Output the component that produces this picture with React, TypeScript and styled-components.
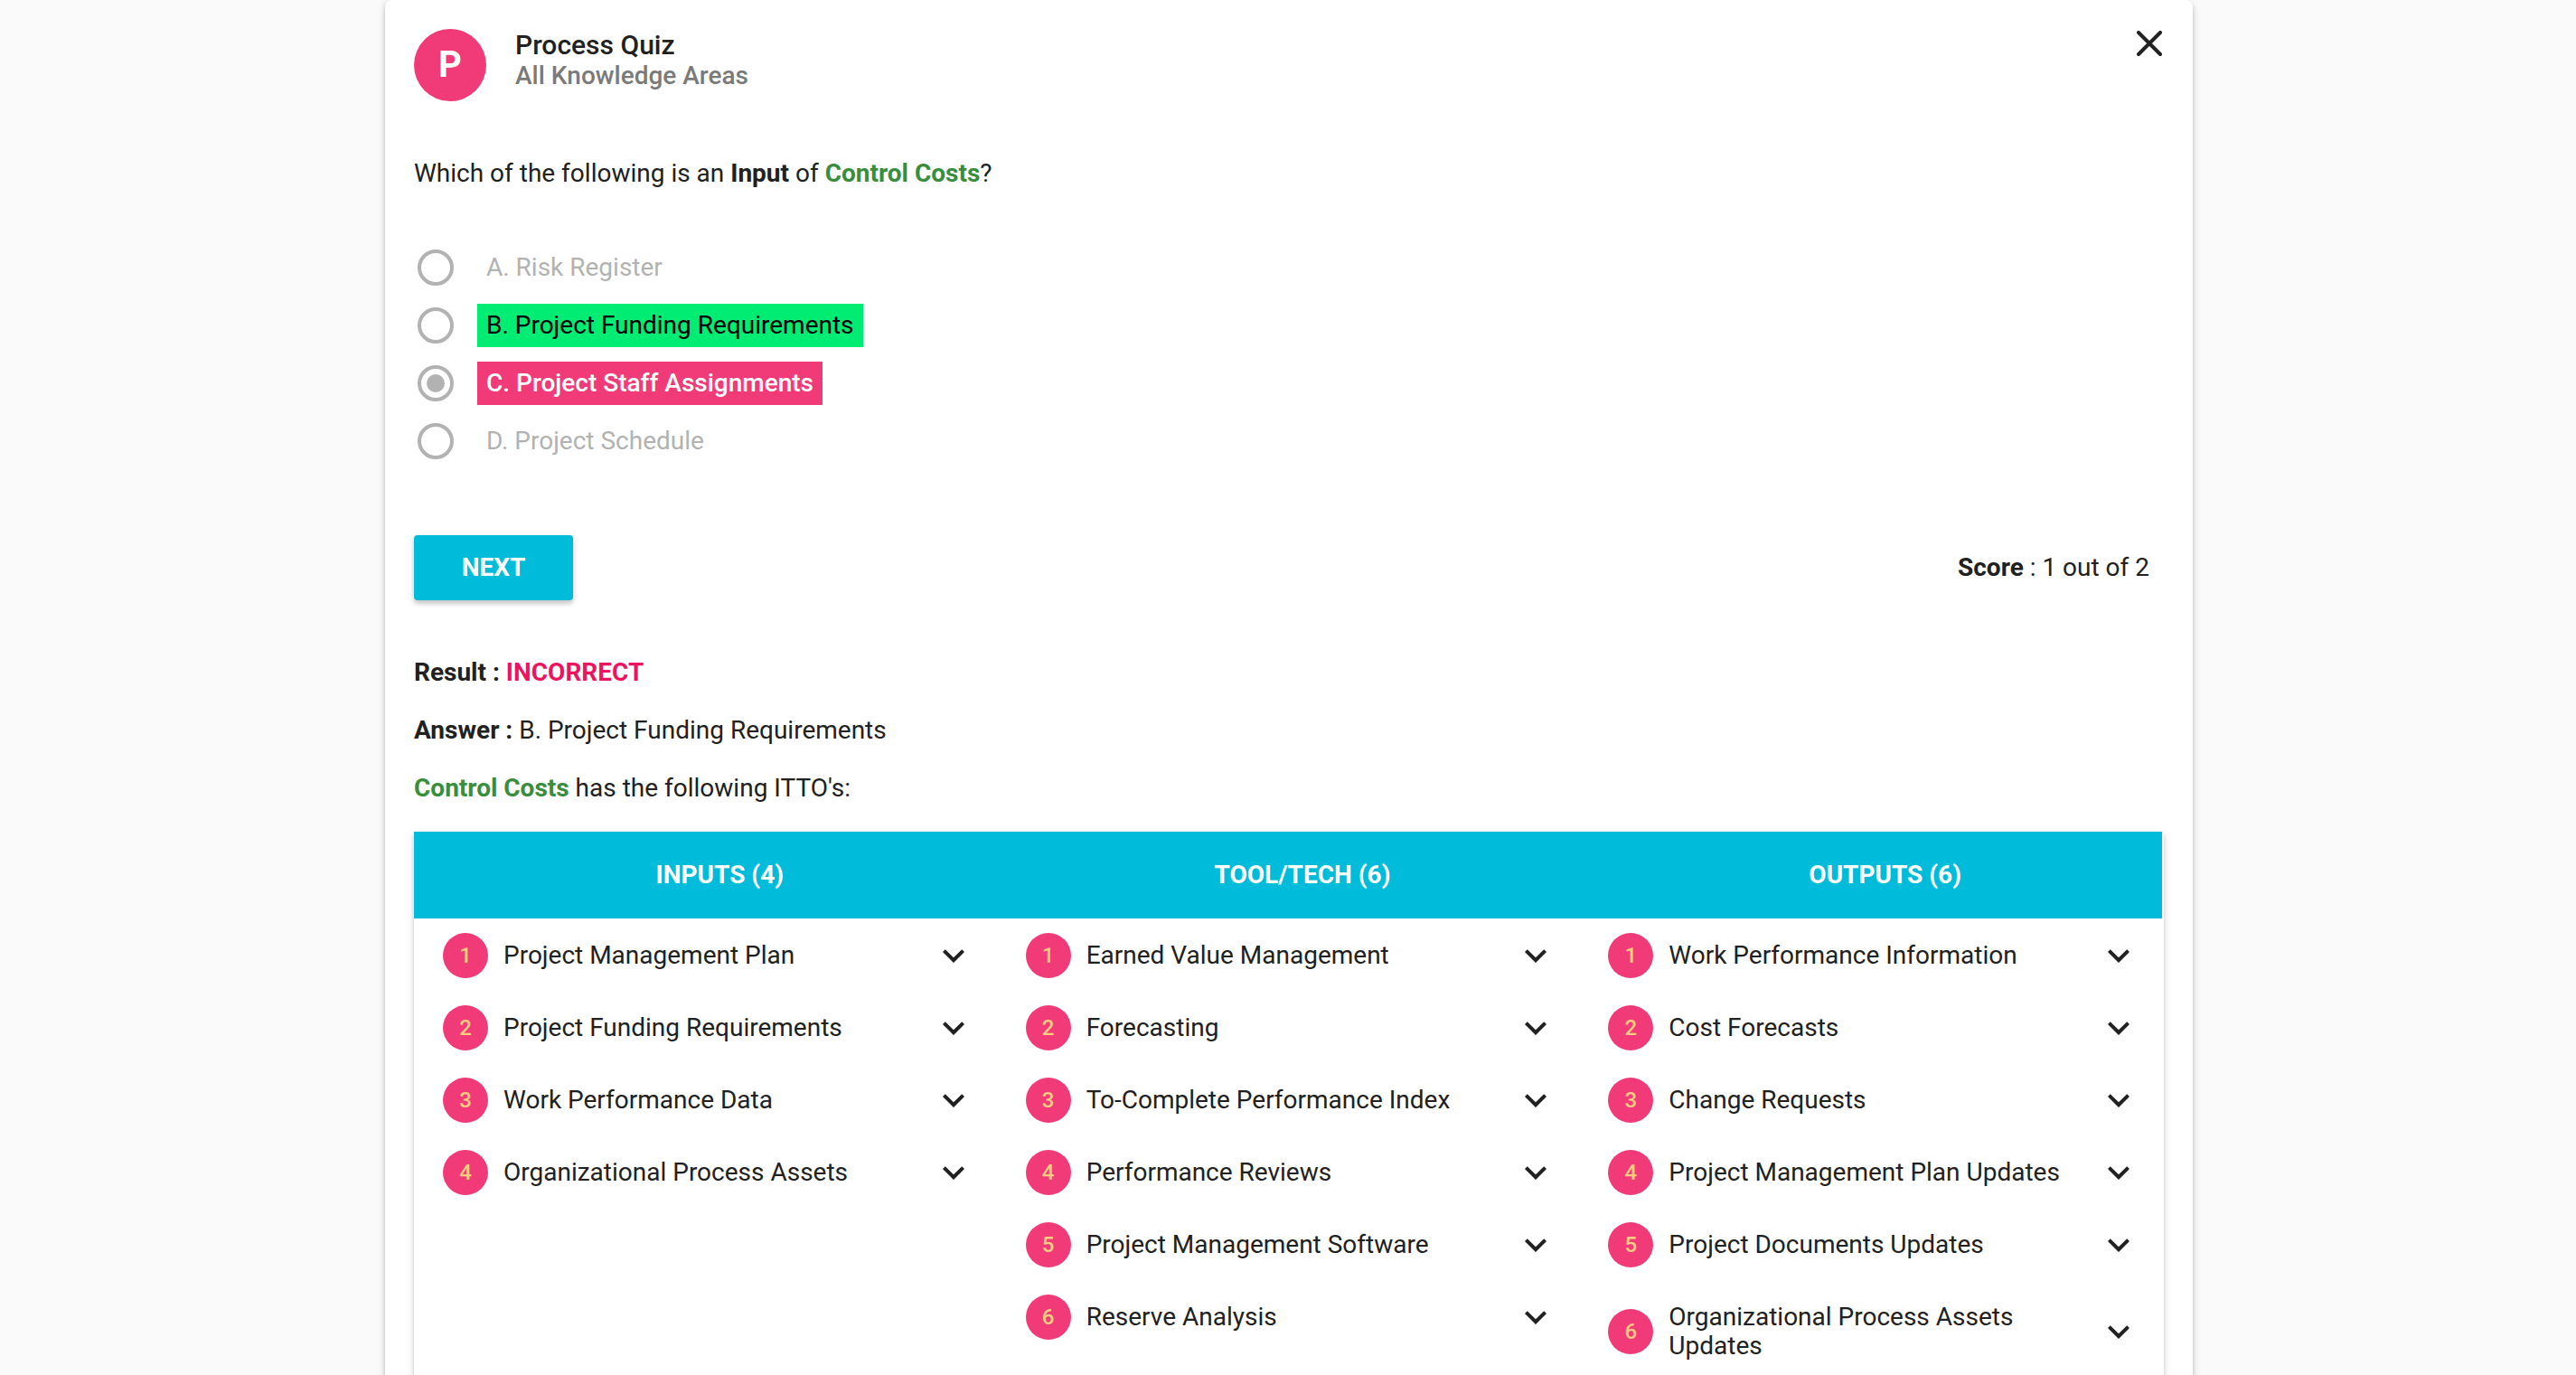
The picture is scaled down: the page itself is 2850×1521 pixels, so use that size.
import React from "react";
import styled, { createGlobalStyle, css } from "styled-components";

const color = {
  page: "#fafafa",
  ink: "#212121",
  muted: "#7a7a7a",
  disabled: "#b2b2b2",
  pink: "#f13b78",
  cyan: "#00bcda",
  right: "#00ec72",
  process: "#388e3c",
  wrong: "#ed145f",
  digit: "#ffcc80",
};

const GlobalStyle = createGlobalStyle`
  *, *::before, *::after { box-sizing: border-box; }
  html { background: ${color.page}; scrollbar-width: none; }
  body { margin: 0; padding-left: 2px; font: 400 28px/32px Roboto, sans-serif; color: ${color.ink}; }
  button { font: inherit; color: inherit; border: 0; background: none; padding: 0; cursor: pointer; }
  h1, h2, p, ul, fieldset { margin: 0; padding: 0; border: 0; }
`;

const Card = styled.main`
  max-width: 2000px;
  margin: 0 auto;
  padding: 32px;
  background: #fff;
  border-radius: 8px;
  box-shadow: 0 2px 10px rgba(0, 0, 0, 0.16), 0 4px 4px rgba(0, 0, 0, 0.14);
`;

const Header = styled.header`
  display: flex;
  align-items: flex-start;
  gap: 32px;
`;

const Avatar = styled.div`
  display: grid;
  place-items: center;
  width: 80px;
  height: 80px;
  border-radius: 50%;
  background: ${color.pink};
  color: #fff;
  font-size: 40px;
  font-weight: 700;
`;

const Heading = styled.div`
  flex: 1;
  padding-top: 1px;
  line-height: 34px;
  font-weight: 500;
`;

const Title = styled.h1`
  font-size: 30px;
  font-weight: inherit;
  line-height: inherit;
`;

const Subtitle = styled.p`
  color: ${color.muted};
`;

const CloseButton = styled.button`
  display: flex;
  margin: 2px 2px 0 0;
`;

const Question = styled.p`
  margin-top: 64px;
`;

const ProcessName = styled.strong`
  color: ${color.process};
`;

const Options = styled.fieldset`
  margin: 56px 0 72px;
`;

const Option = styled.label`
  display: flex;
  align-items: center;
  gap: 26px;
  height: 64px;
  padding-left: 4px;
`;

const Radio = styled.input`
  appearance: none;
  display: grid;
  place-items: center;
  width: 40px;
  height: 40px;
  margin: 0;
  border: 4px solid ${color.disabled};
  border-radius: 50%;

  &:checked::before {
    content: "";
    width: 20px;
    height: 20px;
    border-radius: 50%;
    background: ${color.disabled};
  }
`;

type Mark = "none" | "right" | "wrong";

const OptionText = styled.span<{ $mark: Mark }>`
  padding: 8px 10px;
  color: ${color.disabled};
  ${({ $mark }) => $mark === "right" && css`background: ${color.right}; color: #000;`}
  ${({ $mark }) => $mark === "wrong" && css`background: ${color.pink}; color: #fff; font-weight: 500;`}
`;

const Actions = styled.div`
  display: flex;
  align-items: center;
  justify-content: space-between;
  padding-right: 16px;
  margin-bottom: 64px;
`;

const NextButton = styled.button`
  width: 176px;
  height: 72px;
  border-radius: 4px;
  background: ${color.cyan};
  color: #fff;
  font-weight: 700;
  box-shadow: 0 2px 10px rgba(0, 0, 0, 0.12), 0 4px 4px rgba(0, 0, 0, 0.14);
`;

const Feedback = styled.p`
  margin-bottom: 32px;
`;

const Verdict = styled.strong`
  color: ${color.wrong};
`;

const Columns = styled.div`
  display: grid;
  grid-template-columns: repeat(3, 1fr);
  padding-right: 2px;
  background: #fff;
  box-shadow: 0 2px 10px rgba(0, 0, 0, 0.12), 0 4px 4px rgba(0, 0, 0, 0.14);
`;

const ColumnTitle = styled.h2`
  padding: 32px 0 32px 32px;
  background: ${color.cyan};
  color: #fff;
  font-size: 28px;
  font-weight: 700;
  line-height: 32px;
  text-align: center;
`;

const List = styled.ul`
  padding-top: 1px;
  list-style: none;
`;

const Row = styled.button`
  display: flex;
  align-items: center;
  gap: 17px;
  width: 100%;
  min-height: 80px;
  padding: 0 24px 0 32px;
  text-align: left;
`;

const Index = styled.span`
  display: grid;
  place-items: center;
  flex: none;
  width: 50px;
  height: 50px;
  border-radius: 50%;
  background: ${color.pink};
  color: ${color.digit};
  font-size: 24px;
  font-weight: 500;
`;

const RowText = styled.span`
  flex: 1;
  padding: 24px 0;
`;

const Chevron = () => (
  <svg width="48" height="48" viewBox="0 0 24 24" fill="currentColor" aria-hidden="true">
    <path d="M16.59 8.59 12 13.17 7.41 8.59 6 10l6 6 6-6z" />
  </svg>
);

const CloseIcon = () => (
  <svg width="28" height="28" viewBox="0 0 28 28" fill="none" stroke="currentColor" strokeWidth="4" strokeLinecap="round" aria-hidden="true">
    <path d="M2 2 26 26M26 2 2 26" />
  </svg>
);

const options: { text: string; mark: Mark; chosen?: boolean }[] = [
  { text: "A. Risk Register", mark: "none" },
  { text: "B. Project Funding Requirements", mark: "right" },
  { text: "C. Project Staff Assignments", mark: "wrong", chosen: true },
  { text: "D. Project Schedule", mark: "none" },
];

const columns = [
  {
    title: "INPUTS",
    items: ["Project Management Plan", "Project Funding Requirements", "Work Performance Data", "Organizational Process Assets"],
  },
  {
    title: "TOOL/TECH",
    items: [
      "Earned Value Management",
      "Forecasting",
      "To-Complete Performance Index",
      "Performance Reviews",
      "Project Management Software",
      "Reserve Analysis",
    ],
  },
  {
    title: "OUTPUTS",
    items: [
      "Work Performance Information",
      "Cost Forecasts",
      "Change Requests",
      "Project Management Plan Updates",
      "Project Documents Updates",
      "Organizational Process Assets Updates",
    ],
  },
];

export default function App() {
  return (
    <>
      <GlobalStyle />
      <Card>
        <Header>
          <Avatar>P</Avatar>
          <Heading>
            <Title>Process Quiz</Title>
            <Subtitle>All Knowledge Areas</Subtitle>
          </Heading>
          <CloseButton type="button" aria-label="Close">
            <CloseIcon />
          </CloseButton>
        </Header>

        <Question id="question">
          Which of the following is an <strong>Input</strong> of <ProcessName>Control Costs</ProcessName>?
        </Question>

        <Options aria-labelledby="question">
          {options.map((option) => (
            <Option key={option.text}>
              <Radio type="radio" name="answer" disabled defaultChecked={option.chosen} />
              <OptionText $mark={option.mark}>{option.text}</OptionText>
            </Option>
          ))}
        </Options>

        <Actions>
          <NextButton type="button">NEXT</NextButton>
          <p>
            <strong>Score</strong> : 1 out of 2
          </p>
        </Actions>

        <Feedback>
          <strong>Result : </strong>
          <Verdict>INCORRECT</Verdict>
        </Feedback>
        <Feedback>
          <strong>Answer :</strong> B. Project Funding Requirements
        </Feedback>
        <Feedback>
          <ProcessName>Control Costs</ProcessName> has the following ITTO's:
        </Feedback>

        <Columns>
          {columns.map((column) => (
            <section key={column.title}>
              <ColumnTitle>
                {column.title} ({column.items.length})
              </ColumnTitle>
              <List>
                {column.items.map((item, i) => (
                  <li key={item}>
                    <Row type="button" aria-expanded={false}>
                      <Index>{i + 1}</Index>
                      <RowText>{item}</RowText>
                      <Chevron />
                    </Row>
                  </li>
                ))}
              </List>
            </section>
          ))}
        </Columns>
      </Card>
    </>
  );
}
